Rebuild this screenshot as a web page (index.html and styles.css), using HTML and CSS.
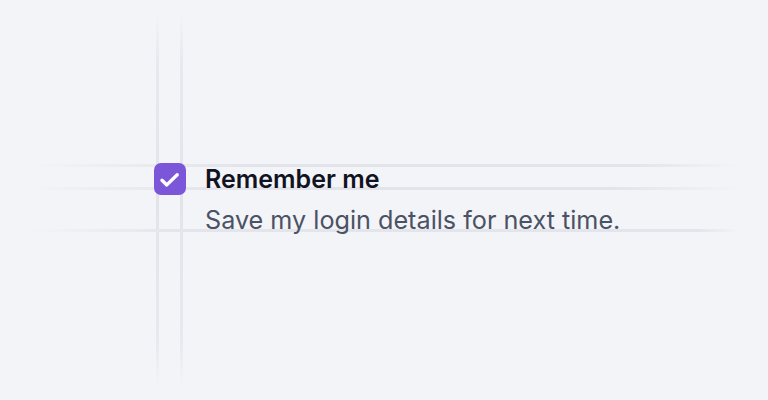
FILE: index.html
```html
<!DOCTYPE html>
<html lang="en">
<head>
<meta charset="utf-8">
<link rel="stylesheet" href="styles.css">
<title>Remember me</title>
</head>
<body>
<div class="guides" aria-hidden="true">
  <div class="vline v1"></div>
  <div class="vline v2"></div>
  <div class="hline h1"></div>
  <div class="hline h2"></div>
  <div class="hline h3"></div>
</div>
<main class="field">
  <span class="checkbox">
    <svg viewBox="0 0 32 32" width="32" height="32" aria-hidden="true">
      <path d="M8 17.3l4.8 4.6 10.4-10.2" fill="none" stroke="#fff" stroke-width="3.4" stroke-linecap="round" stroke-linejoin="round"/>
    </svg>
  </span>
  <div class="text">
    <div class="title">Remember me</div>
    <div class="desc">Save my login details for next time.</div>
  </div>
</main>
</body>
</html>
```
FILE: styles.css
```css
html, body {
  margin: 0;
  padding: 0;
}
body {
  width: 768px;
  height: 400px;
  background: #f3f4f8;
  font-family: Inter, "Noto Sans", sans-serif;
  overflow: hidden;
  position: relative;
}
.guides {
  position: absolute;
  inset: 0;
  pointer-events: none;
}
.vline {
  position: absolute;
  top: 15px;
  width: 3px;
  height: 370px;
  background: linear-gradient(to bottom, rgba(228,229,235,0) 0%, #e8e9ee 12%, #e3e4ea 50%, #e8e9ee 88%, rgba(228,229,235,0) 100%);
}
.v1 { left: 156px; }
.v2 { left: 180px; }
.hline {
  position: absolute;
  left: 30px;
  width: 710px;
  height: 3px;
}
.h1 {
  top: 164px;
  background: linear-gradient(to right, rgba(228,229,235,0) 0%, #ebecf0 14%, #e3e4e9 30%, #e3e4e9 85%, rgba(228,229,235,0) 100%);
}
.h2 {
  top: 187px;
  background: linear-gradient(to right, rgba(228,229,235,0) 0%, #ebecf0 12%, #e3e4e9 30%, #e3e4e9 82%, rgba(228,229,235,0) 100%);
}
.h3 {
  top: 229px;
  background: linear-gradient(to right, rgba(228,229,235,0) 0%, #ebecf0 12%, #e4e5ea 20%, #e4e5ea 94%, rgba(228,229,235,0) 100%);
}
.field {
  position: relative;
  display: flex;
  align-items: flex-start;
  gap: 19px;
  padding: 163px 0 0 154px;
}
.checkbox {
  flex: none;
  width: 32px;
  height: 32px;
  border-radius: 7px;
  background: #7b56d9;
  display: flex;
}
.text {
  display: flex;
  flex-direction: column;
  padding-top: 1px;
}
.title {
  font-size: 25px;
  line-height: 30px;
  font-weight: 600;
  color: #111322;
}
.desc {
  margin-top: 11px;
  font-size: 25.2px;
  line-height: 30px;
  font-weight: 400;
  color: #4b5264;
}
```
